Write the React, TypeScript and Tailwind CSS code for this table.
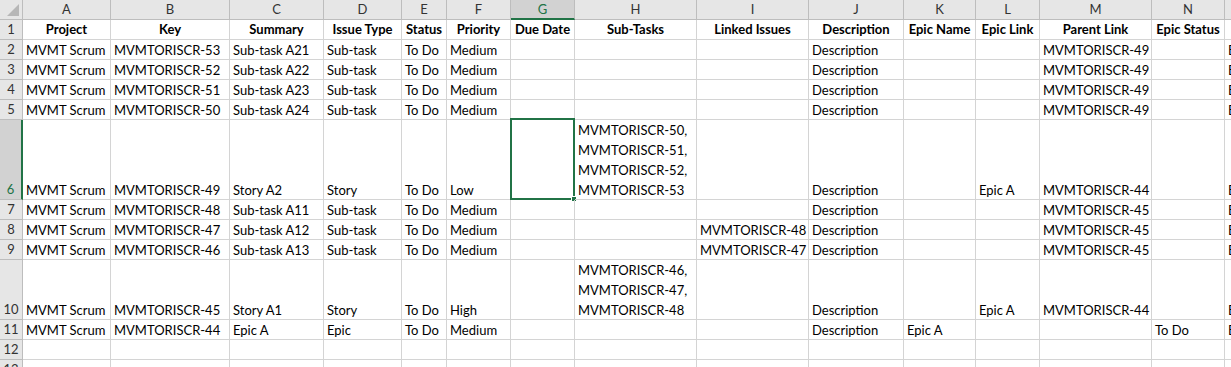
const columns = ['A', 'B', 'C', 'D', 'E', 'F', 'G', 'H', 'I', 'J', 'K', 'L', 'M', 'N', 'O'];

const headers = [
  'Project',
  'Key',
  'Summary',
  'Issue Type',
  'Status',
  'Priority',
  'Due Date',
  'Sub-Tasks',
  'Linked Issues',
  'Description',
  'Epic Name',
  'Epic Link',
  'Parent Link',
  'Epic Status',
  'Epic Color',
];

type Row = { height: string; cells: string[] };

const sub = (key: string, summary: string, linked = '', parent = 'MVMTORISCR-49'): string[] => [
  'MVMT Scrum', key, summary, 'Sub-task', 'To Do', 'Medium', '', '', linked, 'Description', '', '', parent, '', 'Epic',
];

const rows: Row[] = [
  { height: 'h-[20px]', cells: sub('MVMTORISCR-53', 'Sub-task A21') },
  { height: 'h-[20px]', cells: sub('MVMTORISCR-52', 'Sub-task A22') },
  { height: 'h-[20px]', cells: sub('MVMTORISCR-51', 'Sub-task A23') },
  { height: 'h-[20px]', cells: sub('MVMTORISCR-50', 'Sub-task A24') },
  {
    height: 'h-[80px]',
    cells: [
      'MVMT Scrum', 'MVMTORISCR-49', 'Story A2', 'Story', 'To Do', 'Low', '',
      'MVMTORISCR-50,\nMVMTORISCR-51,\nMVMTORISCR-52,\nMVMTORISCR-53',
      '', 'Description', '', 'Epic A', 'MVMTORISCR-44', '', 'Epic',
    ],
  },
  { height: 'h-[20px]', cells: sub('MVMTORISCR-48', 'Sub-task A11', '', 'MVMTORISCR-45') },
  { height: 'h-[20px]', cells: sub('MVMTORISCR-47', 'Sub-task A12', 'MVMTORISCR-48', 'MVMTORISCR-45') },
  { height: 'h-[20px]', cells: sub('MVMTORISCR-46', 'Sub-task A13', 'MVMTORISCR-47', 'MVMTORISCR-45') },
  {
    height: 'h-[60px]',
    cells: [
      'MVMT Scrum', 'MVMTORISCR-45', 'Story A1', 'Story', 'To Do', 'High', '',
      'MVMTORISCR-46,\nMVMTORISCR-47,\nMVMTORISCR-48',
      '', 'Description', '', 'Epic A', 'MVMTORISCR-44', '', 'Epic',
    ],
  },
  {
    height: 'h-[20px]',
    cells: [
      'MVMT Scrum', 'MVMTORISCR-44', 'Epic A', 'Epic', 'To Do', 'Medium', '', '', '',
      'Description', 'Epic A', '', '', 'To Do', 'Epic',
    ],
  },
  { height: 'h-[20px]', cells: Array(15).fill('') },
  { height: 'h-[20px]', cells: Array(15).fill('') },
];

const gridCols =
  'grid-cols-[23px_88px_119px_94px_78px_45px_64px_64px_122px_112px_95px_72px_64px_112px_73px_90px]';

export default function App() {
  return (
    <div className="w-[1231px] h-[367px] overflow-hidden bg-white font-['Lato','Liberation_Sans',sans-serif] text-[13px] text-black">
      <div className={`grid ${gridCols} w-max`}>
        {/* column header row */}
        <div className="relative h-[20px] bg-[#e6e6e6] border-r border-b border-[#bdbdbd]">
          <svg className="absolute right-[3px] bottom-[3px]" width="12" height="12" viewBox="0 0 12 12">
            <polygon points="12,0 12,12 0,12" fill="#b7b7b7" />
          </svg>
        </div>
        {columns.map((c) =>
          c === 'G' ? (
            <div
              key={c}
              className="h-[20px] bg-[#d2d2d2] border-r border-[#bdbdbd] border-b-2 border-b-[#217346] flex items-center justify-center text-[#217346] leading-none pt-[1px]"
            >
              {c}
            </div>
          ) : (
            <div
              key={c}
              className="h-[20px] bg-[#e6e6e6] border-r border-b border-[#bdbdbd] flex items-center justify-center text-[#333] leading-none"
            >
              {c}
            </div>
          ),
        )}

        {/* row 1: titles */}
        <div className="h-[20px] bg-[#e6e6e6] border-r border-b border-[#bdbdbd] flex items-end justify-center text-[#333] leading-[19px]">
          1
        </div>
        {headers.map((h) => (
          <div
            key={h}
            className="h-[20px] border-r border-b border-[#d4d4d4] flex items-end justify-center font-bold leading-[19px] whitespace-nowrap overflow-hidden"
          >
            {h}
          </div>
        ))}

        {/* data rows */}
        {rows.map((row, i) => {
          const n = i + 2;
          const selected = n === 6;
          return [
            <div
              key={`h${n}`}
              className={
                selected
                  ? `${row.height} bg-[#d2d2d2] border-r-2 border-r-[#217346] border-b border-b-[#bdbdbd] flex items-end justify-center text-[#217346] leading-[19px]`
                  : `${row.height} bg-[#e6e6e6] border-r border-b border-[#bdbdbd] flex items-end justify-center text-[#333] leading-[19px]`
              }
            >
              {n}
            </div>,
            ...row.cells.map((cell, j) => (
              <div
                key={`${n}-${j}`}
                className={`${row.height} relative border-r border-b border-[#d4d4d4] flex items-end px-[3px] leading-[20px] whitespace-pre`}
              >
                <span className="-mb-[1px]">{cell}</span>
                {selected && j === 6 && (
                  <div className="absolute -left-[1px] -top-[2px] -right-[1px] -bottom-[1px] border-2 border-[#217346]">
                    <div className="absolute -right-[4px] -bottom-[4px] w-[6px] h-[6px] bg-[#217346] border border-white" />
                  </div>
                )}
              </div>
            )),
          ];
        })}
      </div>
    </div>
  );
}
